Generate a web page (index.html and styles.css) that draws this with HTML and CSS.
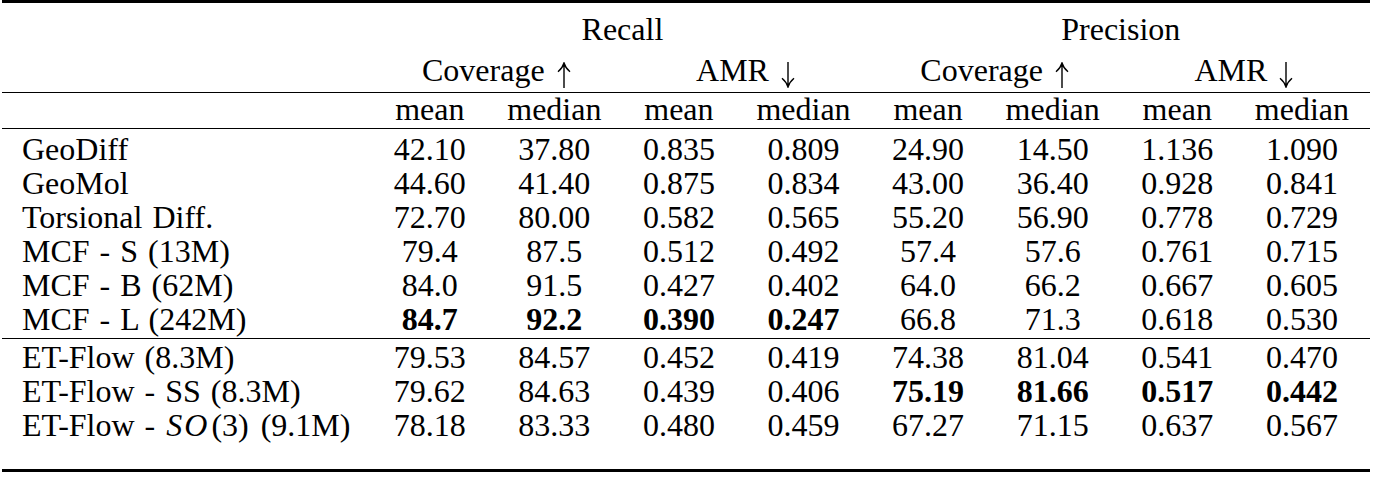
FILE: index.html
```html
<!DOCTYPE html>
<html lang="en">
<head>
<meta charset="utf-8">
<title>Conformer generation results</title>
<link rel="stylesheet" href="styles.css">
</head>
<body>
<table class="results">
  <colgroup>
    <col class="c-label">
    <col class="c-mean"><col class="c-median"><col class="c-mean"><col class="c-median">
    <col class="c-mean"><col class="c-median"><col class="c-mean"><col class="c-median">
  </colgroup>
  <thead>
    <tr class="r-group">
      <th></th>
      <th colspan="4">Recall</th>
      <th colspan="4">Precision</th>
    </tr>
    <tr class="r-metric">
      <th></th>
      <th colspan="2">Coverage <svg class="arrow" viewBox="0 0 14 26" width="14" height="26" aria-label="up"><path d="M7 1.5V26M1 9.8C3.8 7.4 6 4.6 7 1 8 4.6 10.2 7.4 13 9.8" /></svg></th>
      <th colspan="2">AMR <svg class="arrow" viewBox="0 0 14 26" width="14" height="26" aria-label="down"><path d="M7 0V24.5M1 16.2C3.8 18.6 6 21.4 7 25 8 21.4 10.2 18.6 13 16.2" /></svg></th>
      <th colspan="2">Coverage <svg class="arrow" viewBox="0 0 14 26" width="14" height="26" aria-label="up"><path d="M7 1.5V26M1 9.8C3.8 7.4 6 4.6 7 1 8 4.6 10.2 7.4 13 9.8" /></svg></th>
      <th colspan="2">AMR <svg class="arrow" viewBox="0 0 14 26" width="14" height="26" aria-label="down"><path d="M7 0V24.5M1 16.2C3.8 18.6 6 21.4 7 25 8 21.4 10.2 18.6 13 16.2" /></svg></th>
    </tr>
    <tr class="r-stat">
      <th></th>
      <th>mean</th><th>median</th><th>mean</th><th>median</th>
      <th>mean</th><th>median</th><th>mean</th><th>median</th>
    </tr>
  </thead>
  <tbody class="b-base">
    <tr class="first">
      <td class="label">GeoDiff</td>
      <td>42.10</td><td>37.80</td><td>0.835</td><td>0.809</td>
      <td>24.90</td><td>14.50</td><td>1.136</td><td>1.090</td>
    </tr>
    <tr>
      <td class="label">GeoMol</td>
      <td>44.60</td><td>41.40</td><td>0.875</td><td>0.834</td>
      <td>43.00</td><td>36.40</td><td>0.928</td><td>0.841</td>
    </tr>
    <tr>
      <td class="label">Torsional Diff.</td>
      <td>72.70</td><td>80.00</td><td>0.582</td><td>0.565</td>
      <td>55.20</td><td>56.90</td><td>0.778</td><td>0.729</td>
    </tr>
    <tr>
      <td class="label">MCF - S (13M)</td>
      <td>79.4</td><td>87.5</td><td>0.512</td><td>0.492</td>
      <td>57.4</td><td>57.6</td><td>0.761</td><td>0.715</td>
    </tr>
    <tr>
      <td class="label">MCF - B (62M)</td>
      <td>84.0</td><td>91.5</td><td>0.427</td><td>0.402</td>
      <td>64.0</td><td>66.2</td><td>0.667</td><td>0.605</td>
    </tr>
    <tr class="last">
      <td class="label">MCF - L (242M)</td>
      <td><b>84.7</b></td><td><b>92.2</b></td><td><b>0.390</b></td><td><b>0.247</b></td>
      <td>66.8</td><td>71.3</td><td>0.618</td><td>0.530</td>
    </tr>
  </tbody>
  <tbody class="b-ours">
    <tr class="first">
      <td class="label">ET-Flow (8.3M)</td>
      <td>79.53</td><td>84.57</td><td>0.452</td><td>0.419</td>
      <td>74.38</td><td>81.04</td><td>0.541</td><td>0.470</td>
    </tr>
    <tr>
      <td class="label">ET-Flow - SS (8.3M)</td>
      <td>79.62</td><td>84.63</td><td>0.439</td><td>0.406</td>
      <td><b>75.19</b></td><td><b>81.66</b></td><td><b>0.517</b></td><td><b>0.442</b></td>
    </tr>
    <tr class="last">
      <td class="label">ET-Flow - <i class="math">SO</i><span class="math-paren">(3)</span> (9.1M)</td>
      <td>78.18</td><td>83.33</td><td>0.480</td><td>0.459</td>
      <td>67.27</td><td>71.15</td><td>0.637</td><td>0.567</td>
    </tr>
  </tbody>
</table>
</body>
</html>
```

FILE: styles.css
```css
html, body {
  margin: 0;
  padding: 0;
  background: #ffffff;
}

.results {
  margin-left: 2px;
  width: 1368px;
  table-layout: fixed;
  border-collapse: collapse;
  font-family: "Liberation Serif", "Times New Roman", "DejaVu Serif", serif;
  font-size: 32px;
  color: #000000;
  border-top: 3px solid #000000;
  border-bottom: 3px solid #000000;
}

.c-label { width: 371px; }
.c-mean { width: 113px; }
.c-median { width: 136px; }

.results th,
.results td {
  padding: 0;
  text-align: center;
  font-weight: normal;
  white-space: nowrap;
}

.results td.label {
  text-align: left;
  padding-left: 20px;
  word-spacing: 2px;
}

.results b {
  font-weight: bold;
}

.math {
  font-style: italic;
  letter-spacing: 2px;
  padding-left: 1px;
  padding-right: 2px;
}

.math-paren {
  padding-right: 2px;
}

.arrow {
  display: inline-block;
  vertical-align: -7px;
  margin-left: 4px;
  margin-right: 3px;
  fill: none;
  stroke: #000000;
  stroke-width: 1.4;
}

/* header rows */
.r-group th {
  line-height: 40px;
  padding-top: 6px;
  padding-bottom: 2px;
}

.r-metric th {
  line-height: 38px;
  padding-bottom: 3px;
  border-bottom: 1px solid #000000;
}

.r-stat th {
  line-height: 33px;
  padding-bottom: 2px;
  border-bottom: 1px solid #000000;
}

/* body rows */
.results tbody td {
  line-height: 34px;
}

.b-base tr.first td {
  padding-top: 3px;
}

.b-base tr.last td {
  padding-bottom: 2px;
  border-bottom: 1px solid #000000;
}

.b-ours tr.first td {
  padding-top: 1px;
}

.b-ours tr.last td {
  padding-bottom: 27px;
}
```
